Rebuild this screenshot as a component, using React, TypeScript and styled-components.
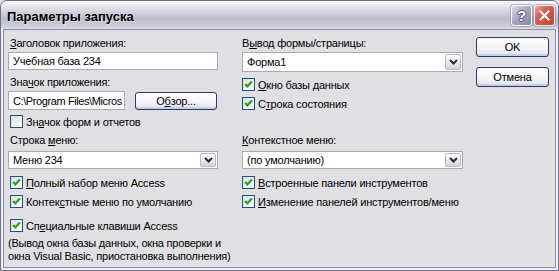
import React from 'react';
import styled, { createGlobalStyle } from 'styled-components';

const GlobalStyle = createGlobalStyle`
  html, body {
    margin: 0;
    padding: 0;
    background: #e0dfe3;
  }
  body {
    font-family: "Liberation Sans", Arial, sans-serif;
    font-size: 11px;
    letter-spacing: -0.2px;
    color: #000;
  }
  u {
    text-underline-offset: 1px;
  }
`;

const Window = styled.div`
  width: 559px;
  height: 271px;
  box-sizing: border-box;
  border: 1px solid #6f6f93;
  border-radius: 7px 7px 0 0;
  overflow: hidden;
  display: flex;
  flex-direction: column;
  background: #e0dfe3;
`;

const TitleBar = styled.div`
  height: 28px;
  flex: none;
  display: flex;
  align-items: center;
  gap: 2px;
  padding: 0 3px 0 6px;
  background: linear-gradient(
    to bottom,
    #fbfbfd 0%,
    #ececf3 12%,
    #d4d4e0 38%,
    #bdbdcf 62%,
    #c6c6d6 82%,
    #dcdce6 100%
  );
`;

const Title = styled.div`
  flex: 1;
  padding-top: 3px;
  font-size: 13px;
  font-weight: bold;
  letter-spacing: 0;
  color: #000;
  text-shadow: 1px 1px 0 rgba(255, 255, 255, 0.5);
`;

const CaptionButton = styled.div<{ $kind: 'help' | 'close' }>`
  width: 21px;
  height: 21px;
  box-sizing: border-box;
  border: 1px solid #fff;
  border-radius: 3px;
  display: flex;
  align-items: center;
  justify-content: center;
  background: ${p =>
    p.$kind === 'close'
      ? 'linear-gradient(135deg, #f3a89c 0%, #e0604f 35%, #c8402f 100%)'
      : 'linear-gradient(135deg, #dedeec 0%, #a8a8c4 45%, #8787a8 100%)'};
  box-shadow: 0 0 0 1px rgba(80, 80, 110, 0.35);
`;

const HelpGlyph = styled.span`
  font-family: "Liberation Sans", Arial, sans-serif;
  font-weight: bold;
  font-size: 15px;
  line-height: 1;
  color: #fff;
  text-shadow: 1px 0 0 #55557a, -1px 0 0 #55557a, 0 1px 0 #55557a, 0 -1px 0 #55557a;
`;

const Body = styled.div`
  flex: 1;
  display: flex;
  border: 2px solid #efeff4;
  border-top: none;
  box-shadow: inset 0 0 0 1px #8e8eac;
  padding: 8px 0 0 5px;
`;

const Column = styled.div<{ $w: number; $ml?: number }>`
  width: ${p => p.$w}px;
  margin-left: ${p => p.$ml ?? 0}px;
  display: flex;
  flex-direction: column;
  flex: none;
`;

const Label = styled.div<{ $mt?: number; $ml?: number }>`
  margin-top: ${p => p.$mt ?? 0}px;
  margin-left: ${p => p.$ml ?? 0}px;
  height: 13px;
  line-height: 13px;
  white-space: nowrap;
`;

const Field = styled.div<{ $mt?: number; $w?: number; $h: number }>`
  margin-top: ${p => p.$mt ?? 0}px;
  width: ${p => (p.$w ? `${p.$w}px` : 'auto')};
  height: ${p => p.$h}px;
  box-sizing: border-box;
  border: 1px solid #a5acb5;
  background: #fff;
  display: flex;
  align-items: center;
  padding: 1px;
  overflow: hidden;
  flex: none;
`;

const FieldText = styled.span<{ $tight?: boolean }>`
  flex: 1;
  padding-left: 3px;
  white-space: nowrap;
  overflow: hidden;
  letter-spacing: ${p => (p.$tight ? '-0.4px' : 'inherit')};
`;

const DropButton = styled.div`
  width: 16px;
  align-self: stretch;
  box-sizing: border-box;
  border: 1px solid #b9b9c7;
  border-radius: 2px;
  background: linear-gradient(to bottom, #ffffff, #e6e6ee 60%, #d2d2dc);
  display: flex;
  align-items: center;
  justify-content: center;
`;

const Row = styled.div<{ $mt?: number; $gap: number }>`
  margin-top: ${p => p.$mt ?? 0}px;
  display: flex;
  align-items: center;
  gap: ${p => p.$gap}px;
`;

const CheckRow = styled.div<{ $mt?: number; $ml?: number }>`
  margin-top: ${p => p.$mt ?? 0}px;
  margin-left: ${p => p.$ml ?? 0}px;
  height: 13px;
  display: flex;
  align-items: center;
  gap: 3px;
  white-space: nowrap;
`;

const Box = styled.span`
  width: 13px;
  height: 13px;
  box-sizing: border-box;
  border: 1px solid #1c5180;
  background: linear-gradient(135deg, #dcdcd7 0%, #f4f4f0 60%, #ffffff 100%);
  display: flex;
  align-items: center;
  justify-content: center;
  flex: none;
`;

const PushButton = styled.div<{ $w: number; $h: number; $mt?: number }>`
  width: ${p => p.$w}px;
  height: ${p => p.$h}px;
  margin-top: ${p => p.$mt ?? 0}px;
  box-sizing: border-box;
  border: 1px solid #2c3a6a;
  border-radius: 3px;
  background: linear-gradient(to bottom, #ffffff 0%, #f4f4f8 55%, #e2e4ee 100%);
  box-shadow: inset 0 -2px 0 #c9cfe2, inset 0 1px 0 #fff;
  display: flex;
  align-items: center;
  justify-content: center;
  flex: none;
`;

const Note = styled.div<{ $mt?: number }>`
  margin-top: ${p => p.$mt ?? 0}px;
  line-height: 13px;
  white-space: nowrap;
`;

const Chevron = () => (
  <svg width="9" height="6" viewBox="0 0 9 6">
    <polyline points="1,1 4.5,4.5 8,1" fill="none" stroke="#2b2b3a" strokeWidth="2" />
  </svg>
);

const Tick = () => (
  <svg width="9" height="9" viewBox="0 0 9 9">
    <polyline points="1.2,4 3.4,6.4 7.8,1.6" fill="none" stroke="#21a121" strokeWidth="2.2" />
  </svg>
);

const Check = ({ on, children, mt, ml }: { on: boolean; children: React.ReactNode; mt?: number; ml?: number }) => (
  <CheckRow $mt={mt} $ml={ml}>
    <Box>{on && <Tick />}</Box>
    <span>{children}</span>
  </CheckRow>
);

const Combo = ({ text, mt, h }: { text: string; mt?: number; h: number }) => (
  <Field $mt={mt} $h={h}>
    <FieldText>{text}</FieldText>
    <DropButton>
      <Chevron />
    </DropButton>
  </Field>
);

export default function App() {
  return (
    <>
      <GlobalStyle />
      <Window>
        <TitleBar>
          <Title>Параметры запуска</Title>
          <CaptionButton $kind="help">
            <HelpGlyph>?</HelpGlyph>
          </CaptionButton>
          <CaptionButton $kind="close">
            <svg width="11" height="11" viewBox="0 0 11 11">
              <path d="M1.5 1.5 L9.5 9.5 M9.5 1.5 L1.5 9.5" stroke="#fff" strokeWidth="2.2" strokeLinecap="square" />
            </svg>
          </CaptionButton>
        </TitleBar>

        <Body>
          <Column $w={210}>
            <Label $ml={2}><u>З</u>аголовок приложения:</Label>
            <Field $mt={2} $h={18}>
              <FieldText>Учебная база 234</FieldText>
            </Field>
            <Label $mt={6} $ml={2}>Зна<u>ч</u>ок приложения:</Label>
            <Row $mt={2} $gap={10}>
              <Field $w={117} $h={19}>
                <FieldText $tight>C:\Program Files\Micros</FieldText>
              </Field>
              <PushButton $w={82} $h={18}>О<u>б</u>зор...</PushButton>
            </Row>
            <Check on={false} mt={5} ml={2}>Зн<u>а</u>чок форм и отчетов</Check>
            <Label $mt={6} $ml={2}>Строка <u>м</u>еню:</Label>
            <Combo text="Меню 234" mt={4} h={18} />
            <Check on mt={7} ml={2}><u>П</u>олный набор меню Access</Check>
            <Check on mt={6} ml={2}>Контек<u>с</u>тные меню по умолчанию</Check>
            <Check on mt={11} ml={2}>Сп<u>е</u>циальные клавиши Access</Check>
            <Note $mt={5}>
              (Вывод окна базы данных, окна проверки и
              <br />
              окна Visual Basic, приостановка выполнения)
            </Note>
          </Column>

          <Column $w={221} $ml={24}>
            <Label>В<u>ы</u>вод формы/страницы:</Label>
            <Combo text="Форма1" mt={2} h={20} />
            <Check on mt={6}><u>О</u>кно базы данных</Check>
            <Check on mt={6}>С<u>т</u>рока состояния</Check>
            <Label $mt={24}><u>К</u>онтекстное меню:</Label>
            <Combo text="(по умолчанию)" mt={4} h={18} />
            <Check on mt={7}><u>В</u>строенные панели инструментов</Check>
            <Check on mt={6}><u>И</u>зменение панелей инструментов/меню</Check>
          </Column>

          <Column $w={73} $ml={13}>
            <PushButton $w={73} $h={20}>OK</PushButton>
            <PushButton $w={73} $h={20} $mt={10}>Отмена</PushButton>
          </Column>
        </Body>
      </Window>
    </>
  );
}
